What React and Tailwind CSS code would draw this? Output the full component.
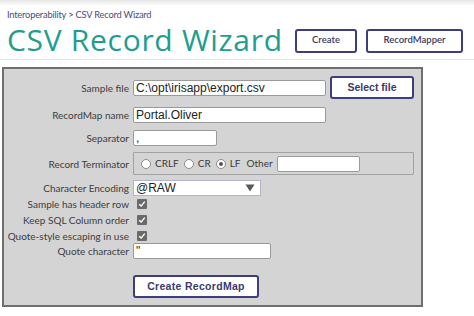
import React from "react";

const lbl = "font-['Lato',sans-serif] text-[10px] text-[#3c3c3c] text-right pr-[4px] w-[129px] shrink-0 leading-none whitespace-nowrap";
const inp = "bg-white border border-[#9a9a9a] rounded-[2px] h-[16px] flex items-center pl-[2px] font-['Liberation_Sans',sans-serif] text-[12px] text-[#222] leading-none whitespace-nowrap overflow-hidden";
const btn = "bg-white border-2 border-[#3d3d80] rounded-[3px] flex items-center justify-center font-['Liberation_Sans',sans-serif] font-bold text-[#3a3a6e] leading-none whitespace-nowrap";

function Radio({ checked, label }) {
  return (
    <div className="flex items-center gap-[4px]">
      <div className="w-[10px] h-[10px] rounded-full border border-[#8a8a8a] bg-white flex items-center justify-center">
        {checked && <div className="w-[4px] h-[4px] rounded-full bg-[#555]" />}
      </div>
      <span>{label}</span>
    </div>
  );
}

function Check() {
  return (
    <div className="w-[10px] h-[10px] rounded-[1px] bg-[#6a6a6a] flex items-center justify-center ml-[4px]">
      <svg width="8" height="8" viewBox="0 0 8 8">
        <path d="M1.2 4.2 L3.2 6 L6.8 1.6" stroke="white" strokeWidth="1.4" fill="none" />
      </svg>
    </div>
  );
}

export default function App() {
  return (
    <div className="w-[474px] h-[316px] bg-white relative overflow-hidden">
      <div className="h-[6px] bg-gradient-to-b from-[#e6e6e6] to-white" />
      <div className="pl-[7px] pt-[4px] font-['Lato',sans-serif] text-[9.3px] tracking-[-0.2px] text-[#4b4b80] leading-none h-[14px] whitespace-nowrap">
        Interoperability <span className="text-[#333]">&gt;</span> CSV Record Wizard
      </div>
      <div className="flex items-center h-[40px] border-b border-[#e4e4e4]">
        <div className="pl-[7px] font-['Open_Sans',sans-serif] text-[30px] text-[#1d9e8e] leading-none tracking-[0.7px] w-[295px] whitespace-nowrap">
          CSV Record Wizard
        </div>
        <div className="flex gap-[9px] mt-[2px]">
          <div className="w-[62px] h-[24px] border-2 border-[#3d3d80] rounded-[3px] flex items-center justify-center font-['Lato',sans-serif] text-[9.5px] font-semibold text-[#3a3a5e]">Create</div>
          <div className="w-[97px] h-[24px] border-2 border-[#3d3d80] rounded-[3px] flex items-center justify-center font-['Lato',sans-serif] text-[9.5px] font-semibold text-[#3a3a5e]">RecordMapper</div>
        </div>
      </div>
      <div className="ml-[2px] mt-[7px] w-[421px] h-[240px] border-2 border-[#6f6f6f] bg-[#d4d4d4] flex flex-col">
        <div className="flex items-center h-[23px] mt-[7px]">
          <div className={lbl}>Sample file</div>
          <div className={inp + " w-[193px]"}>C:\opt\irisapp\export.csv</div>
          <div className={btn + " w-[84px] h-[23px] ml-[4px] text-[10.5px]"}>Select file</div>
        </div>
        <div className="flex items-center h-[16px] mt-[8px]">
          <div className={lbl}>RecordMap name</div>
          <div className={inp + " w-[193px]"}>Portal.Oliver</div>
        </div>
        <div className="flex items-center h-[16px] mt-[7px]">
          <div className={lbl}>Separator</div>
          <div className={inp + " w-[84px]"}>,</div>
        </div>
        <div className="flex items-center h-[23px] mt-[6px]">
          <div className={lbl}>Record Terminator</div>
          <div className="w-[281px] h-[23px] border border-[#a2a2a2] rounded-[1px] flex items-center pl-[7px] gap-[5px] font-['Lato',sans-serif] text-[10px] text-[#3a3a3a] whitespace-nowrap">
            <Radio label="CRLF" />
            <Radio label="CR" />
            <Radio checked label="LF" />
            <span className="ml-[1px]">Other</span>
            <div className="bg-white border border-[#9a9a9a] rounded-[2px] h-[16px] w-[83px] -ml-[1px]" />
          </div>
        </div>
        <div className="flex items-center h-[16px] mt-[5px]">
          <div className={lbl}>Character Encoding</div>
          <div className="w-[128px] h-[16px] bg-white border border-[#b4b4cc] flex items-center justify-between pl-[2px] pr-[5px] font-['Liberation_Sans',sans-serif] text-[12px] text-[#222] leading-none">
            <span>@RAW</span>
            <svg width="10" height="8" viewBox="0 0 10 8"><path d="M0.5 0.5 H9.5 L5 7.5 Z" fill="#5a5a5a" /></svg>
          </div>
        </div>
        <div className="flex items-center h-[16px]">
          <div className={lbl}>Sample has header row</div>
          <Check />
        </div>
        <div className="flex items-center h-[16px]">
          <div className={lbl}>Keep SQL Column order</div>
          <Check />
        </div>
        <div className="flex items-center h-[15px]">
          <div className={lbl}>Quote-style escaping in use</div>
          <Check />
        </div>
        <div className="flex items-center h-[16px]">
          <div className={lbl}>Quote character</div>
          <div className={inp + " w-[138px]"}>"</div>
        </div>
        <div className="flex mt-[16px] pl-[129px]">
          <div className={btn + " w-[126px] h-[23px] text-[10.5px] tracking-[0.3px]"}>Create RecordMap</div>
        </div>
      </div>
    </div>
  );
}
